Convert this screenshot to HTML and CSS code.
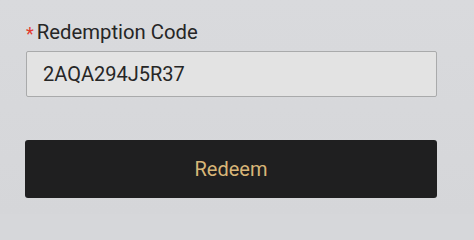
FILE: index.html
```html
<!DOCTYPE html>
<html>
<head>
<meta charset="utf-8">
<link rel="stylesheet" href="styles.css">
</head>
<body>
<div class="form">
  <label class="label" for="code"><span class="req">*</span>Redemption Code</label>
  <input class="field" id="code" type="text" value="2AQA294J5R37">
  <button class="redeem" type="button">Redeem</button>
</div>
</body>
</html>
```
FILE: styles.css
```css
html {
  margin: 0;
  padding: 0;
  background: #d6d7da;
}
body {
  margin: 0;
  padding: 0;
  min-height: 214px;
  background: linear-gradient(180deg, #d9dadd 0%, #d5d6d9 214px, #d6d7da 100%);
  font-family: Roboto, "Liberation Sans", sans-serif;
}
.form {
  display: flex;
  flex-direction: column;
  padding: 20px 37px 16px 25px;
}
.label {
  display: flex;
  align-items: flex-start;
  font-size: 20.3px;
  line-height: 24px;
  color: #262626;
  height: 24px;
  margin-left: 1px;
}
.req {
  color: #e23a2f;
  font-size: 18px;
  line-height: 24px;
  margin-right: 3px;
  position: relative;
  top: 2px;
}
.field {
  box-sizing: border-box;
  margin: 7px 0 0 1px;
  width: 411px;
  height: 46px;
  padding: 0 16px;
  border: 1px solid #a9aaab;
  border-radius: 2px;
  background: #e3e3e3;
  font-family: Roboto, "Liberation Sans", sans-serif;
  font-size: 20px;
  color: #262626;
  outline: none;
}
.redeem {
  box-sizing: border-box;
  margin-top: 43px;
  width: 412px;
  height: 58px;
  border: none;
  border-radius: 3px;
  background: #1f1f20;
  color: #d8b678;
  font-family: Roboto, "Liberation Sans", sans-serif;
  font-size: 20px;
  padding: 0;
}
```
